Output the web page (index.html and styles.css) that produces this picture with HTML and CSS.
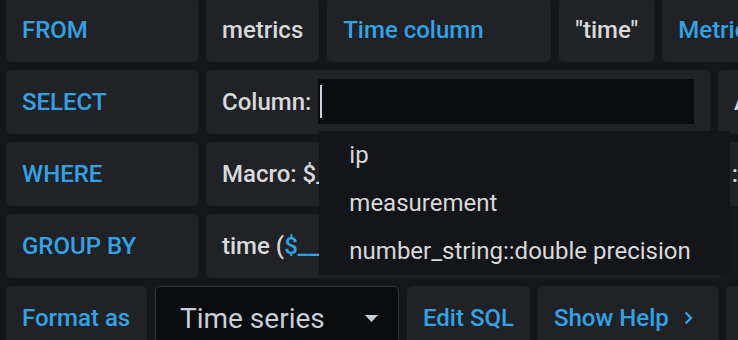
FILE: index.html
```html
<!DOCTYPE html>
<html>
<head>
<meta charset="utf-8">
<link rel="stylesheet" href="styles.css">
</head>
<body>
<div class="editor">
  <div class="row">
    <div class="box kw">FROM</div>
    <div class="box">metrics</div>
    <div class="box blue w-timecol">Time column</div>
    <div class="box">"time"</div>
    <div class="box blue">Metric column</div>
  </div>
  <div class="row">
    <div class="box kw">SELECT</div>
    <div class="box w-column">
      <span>Column:</span>
      <div class="input">
        <span class="cursor"></span>
        <div class="menu">
          <div class="item">ip</div>
          <div class="item">measurement</div>
          <div class="item">number_string::double precision</div>
        </div>
      </div>
    </div>
    <div class="box">Alias</div>
  </div>
  <div class="row">
    <div class="box kw">WHERE</div>
    <div class="box w-macro">
      <span>Macro: $__timeFilter</span>
      <span class="tail">:<span class="blk"></span></span>
    </div>
  </div>
  <div class="row">
    <div class="box kw">GROUP BY</div>
    <div class="box w-group">time (<span class="blue">$__interval</span>, none)</div>
  </div>
  <div class="row">
    <div class="box kw w-format">Format as</div>
    <div class="select">
      <span>Time series</span>
      <svg class="caret" width="13" height="7" viewBox="0 0 13 7"><path d="M0 0 H13 L6.5 7 Z" fill="#c7d0d9"/></svg>
    </div>
    <div class="box blue w-edit">Edit SQL</div>
    <div class="box blue w-help">Show Help
      <svg class="chev" width="9" height="14" viewBox="0 0 9 14"><path d="M1.6 1.5 L7 7 L1.6 12.5" fill="none" stroke="#33a2e5" stroke-width="2.4"/></svg>
    </div>
    <div class="box">Show Generated SQL</div>
  </div>
</div>
</body>
</html>
```
FILE: styles.css
```css
html, body {
  margin: 0;
  padding: 0;
  background: #161719;
  width: 738px;
  height: 340px;
  overflow: hidden;
  font-family: Roboto, "Liberation Sans", sans-serif;
}
.editor {
  display: flex;
  flex-direction: column;
  gap: 8px;
  padding-left: 6px;
  margin-top: -2px;
}
.row {
  display: flex;
  gap: 8px;
  height: 64px;
}
.box {
  box-sizing: border-box;
  flex: none;
  display: flex;
  align-items: center;
  height: 64px;
  padding: 0 16px;
  background: #202226;
  border-radius: 5px;
  font-size: 24px;
  font-weight: 500;
  color: #d8d9da;
  white-space: nowrap;
}
.blue, .kw { color: #33a2e5; }
.kw { width: 192px; }
.w-timecol { width: 224px; }
.w-column { width: 504px; position: relative; }
.w-macro { width: 543px; padding-right: 0; }
.w-group { width: 516px; }
.w-format { width: 141px; }
.w-edit { width: 123px; }
.w-help { width: 180px; }
.tail {
  margin-left: auto;
  display: flex;
  align-items: center;
}
.blk {
  display: inline-block;
  width: 8px;
  height: 18px;
  margin-left: 3px;
  background: #e4e5e6;
}
.input {
  position: relative;
  box-sizing: border-box;
  margin-left: 7px;
  width: 378px;
  height: 45px;
  margin-top: -1px;
  background: #0b0c0e;
  display: flex;
  align-items: center;
  padding-left: 2px;
}
.cursor {
  width: 2px;
  height: 33px;
  background: #c8d0dc;
}
.menu {
  position: absolute;
  left: 1px;
  top: 52px;
  width: 411px;
  height: 144px;
  background: #141518;
  z-index: 10;
}
.item {
  height: 48px;
  display: flex;
  align-items: center;
  padding-left: 30px;
  font-size: 24px;
  font-weight: 400;
  color: #d8d9da;
}
.select {
  box-sizing: border-box;
  flex: none;
  width: 244px;
  height: 64px;
  display: flex;
  align-items: center;
  padding: 0 20px 0 24px;
  background: #0b0c0e;
  border: 1px solid #33363b;
  border-radius: 5px;
  font-size: 28px;
  font-weight: 400;
  color: #c7d0d9;
  white-space: nowrap;
}
.caret { margin-left: auto; }
.chev { margin-left: 15px; }
```
